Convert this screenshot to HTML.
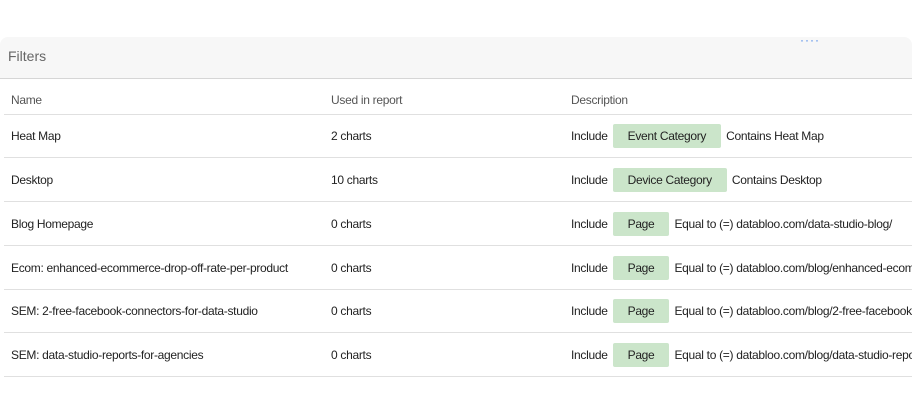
<!DOCTYPE html>
<html><head><style>
body{margin:0;width:915px;height:404px;background:#fff;font-family:"Liberation Sans",sans-serif;position:relative;overflow:hidden;color:#222}
.panel{position:absolute;left:0;top:37px;width:912px;height:41px;background:#f7f7f7;border-radius:8px 8px 0 0;border-bottom:1px solid #d6d6d6}
.panel span{position:absolute;left:8px;top:11px;font-size:14px;color:#666}
.dots{position:absolute;left:800px;top:33px;color:#4a86e8;font-size:12px;letter-spacing:1px}
.row{position:absolute;left:4px;width:908px;border-bottom:1px solid #e0e0e0;font-size:12px;letter-spacing:-0.3px;overflow:hidden}
.row div{position:absolute;top:50%;transform:translateY(-50%);white-space:nowrap}
.c1{left:7px}.c2{left:327px}.c3{left:567px;display:flex;align-items:center}
.chip{background:#cbe5ca;padding:0 15px;height:24px;line-height:24px;margin:0 5px 0 5px;border-radius:2px}
.h{color:#555}
</style></head><body>
<div class="panel"><span>Filters</span></div>
<div class="dots">····</div>
<div class="row h" style="top:79px;height:35px"><div class="c1" style="top:60%">Name</div><div class="c2" style="top:60%">Used in report</div><div class="c3" style="top:60%">Description</div></div>
<div class="row" style="top:114px;height:43px"><div class="c1">Heat Map</div><div class="c2">2 charts</div><div class="c3">Include<span class="chip">Event Category</span>Contains&nbsp;Heat Map</div></div>
<div class="row" style="top:158px;height:43px"><div class="c1">Desktop</div><div class="c2">10 charts</div><div class="c3">Include<span class="chip">Device Category</span>Contains&nbsp;Desktop</div></div>
<div class="row" style="top:202px;height:43px"><div class="c1">Blog Homepage</div><div class="c2">0 charts</div><div class="c3">Include<span class="chip">Page</span>Equal to (=)&nbsp;databloo.com/data-studio-blog/</div></div>
<div class="row" style="top:246px;height:43px"><div class="c1">Ecom: enhanced-ecommerce-drop-off-rate-per-product</div><div class="c2">0 charts</div><div class="c3">Include<span class="chip">Page</span>Equal to (=)&nbsp;databloo.com/blog/enhanced-ecommerce</div></div>
<div class="row" style="top:290px;height:42px"><div class="c1">SEM: 2-free-facebook-connectors-for-data-studio</div><div class="c2">0 charts</div><div class="c3">Include<span class="chip">Page</span>Equal to (=)&nbsp;databloo.com/blog/2-free-facebook</div></div>
<div class="row" style="top:333px;height:43px"><div class="c1">SEM: data-studio-reports-for-agencies</div><div class="c2">0 charts</div><div class="c3">Include<span class="chip">Page</span>Equal to (=)&nbsp;databloo.com/blog/data-studio-reports</div></div>
</body></html>
